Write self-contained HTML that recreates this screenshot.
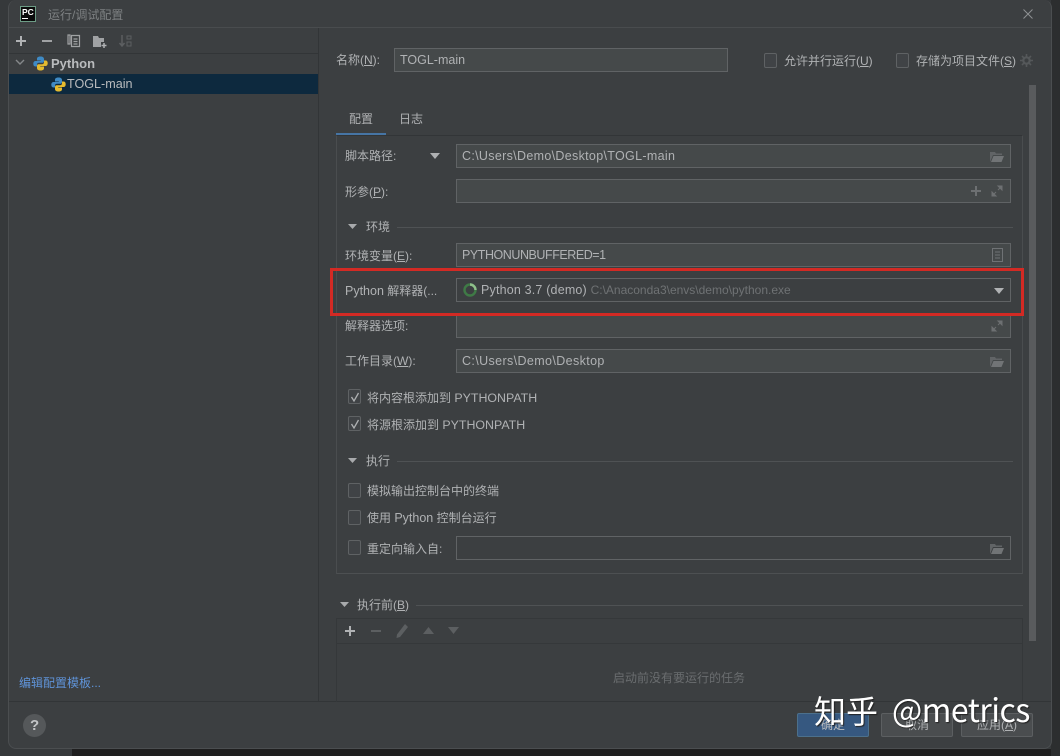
<!DOCTYPE html>
<html><head><meta charset="utf-8">
<style>
*{box-sizing:border-box}
html,body{margin:0;padding:0;width:1060px;height:756px;overflow:hidden;background:#36393b}
body{position:relative;font-family:"Liberation Sans","Noto Sans CJK SC",sans-serif;font-size:12px;color:#b0b2b4;filter:blur(.25px)}
.a{position:absolute}
.t{position:absolute;white-space:nowrap;line-height:16px}
.f{position:absolute;background:#45494a;border:1px solid #606365;height:24px;left:456px;width:555px;color:#b0b2b4;padding-left:5px;line-height:23px;white-space:nowrap;font-size:12.5px}
.cb{position:absolute;width:13px;height:15px;left:348px;border:1px solid #5f6264;background:#404346;border-radius:2px}
.ln{position:absolute;height:1px;background:#4f5254}
.l{font-size:12.4px}
u{text-underline-offset:1px}
svg{position:absolute;overflow:visible}
</style></head><body>
<div class="a" style="left:72px;top:749px;width:988px;height:7px;background:#1f1f1f"></div>
<div class="a" style="left:1051px;top:0;width:9px;height:756px;background:#2c2e2f"></div>
<div class="a" style="left:8px;top:0;width:1044px;height:749px;background:#3c3f41;border-radius:8px;border:1px solid #4b4e50;border-top:0"></div>

<!-- title -->
<div class="ln" style="left:8px;top:27px;width:1043px;background:#494c4e"></div>
<div class="a" style="left:20px;top:6px;width:16px;height:16px;background:#0b0b0b;border:1px solid #6d9c86"></div>
<div class="t" style="left:22px;top:6px;font-size:8.5px;font-weight:bold;color:#fff;line-height:12px">PC</div>
<div class="a" style="left:22px;top:18px;width:6px;height:1px;background:#fff"></div>
<div class="t" style="left:48px;top:7px;color:#7d8082">运行/调试配置</div>
<svg style="left:1023px;top:9px" width="10" height="10"><path d="M0.500 0.500L9.500 9.500M9.500 0.500L0.500 9.500" stroke="#8f9193" stroke-width="1" fill="none"/></svg>

<!-- left toolbar -->
<svg style="left:16px;top:36px" width="10" height="10"><path d="M5 0V10M0 5H10" stroke="#b0b2b4" stroke-width="2"/></svg>
<svg style="left:42px;top:36px" width="10" height="10"><path d="M0 5H10" stroke="#a0a2a4" stroke-width="2"/></svg>
<svg style="left:67px;top:34px" width="13" height="13"><path d="M1 1H3V10H1ZM4.500 1.500H12.500V12.500H4.500ZM6.500 5H10.500M6.500 7.500H10.500M6.500 10H10.500" stroke="#a0a2a4" stroke-width="1.200" fill="none"/></svg>
<svg style="left:93px;top:36px" width="14" height="12"><path d="M0 0H5L6 2H11V6H8V11H0Z" fill="#a0a2a4"/><path d="M11 7V12M8.500 9.500H13.500" stroke="#b0b2b4" stroke-width="1.500"/></svg>
<svg style="left:119px;top:34px" width="14" height="14"><path d="M3 1V12M0.500 9L3 12L5.500 9" stroke="#5c5f61" stroke-width="1.500" fill="none"/><path d="M8 2H12V5H8ZM8 8H12V12H8Z" stroke="#5c5f61" fill="none"/></svg>
<div class="ln" style="left:9px;top:53px;width:310px;background:#323537"></div>
<div class="a" style="left:318px;top:28px;width:1px;height:673px;background:#323537"></div>

<!-- tree -->
<svg style="left:15px;top:59px" width="10" height="7"><path d="M1 1L5 5L9 1" stroke="#85888a" stroke-width="1.400" fill="none"/></svg>
<div class="a" style="left:9px;top:74px;width:309px;height:20px;background:#0d293e"></div>
<svg style="left:33px;top:56px" width="15" height="15" viewBox="0 0 15 15"><path d="M7.500 0.500C4.500 0.500 4 1.700 4 3V4.500H7.800V5H2.500C1 5 0.300 6.300 0.300 7.800C0.300 9.500 1 10.500 2.500 10.500H4V8.500C4 7.300 5 6.800 6 6.800H9.500C10.500 6.800 11 6 11 5V3C11 1.500 9.800 0.500 7.500 0.500Z" fill="#3f8ac4"/><path d="M7.500 14.500C10.500 14.500 11 13.300 11 12V10.500H7.200V10H12.500C14 10 14.700 8.700 14.700 7.200C14.700 5.500 14 4.500 12.500 4.500H11V6.500C11 7.700 10 8.200 9 8.200H5.500C4.500 8.200 4 9 4 10V12C4 13.500 5.200 14.500 7.500 14.500Z" fill="#e4bb2f"/></svg>
<div class="t" style="left:51px;top:56px;font-weight:bold;color:#b9bbbd;font-size:13px">Python</div>
<svg style="left:51px;top:77px" width="15" height="15" viewBox="0 0 15 15"><path d="M7.500 0.500C4.500 0.500 4 1.700 4 3V4.500H7.800V5H2.500C1 5 0.300 6.300 0.300 7.800C0.300 9.500 1 10.500 2.500 10.500H4V8.500C4 7.300 5 6.800 6 6.800H9.500C10.500 6.800 11 6 11 5V3C11 1.500 9.800 0.500 7.500 0.500Z" fill="#3f8ac4"/><path d="M7.500 14.500C10.500 14.500 11 13.300 11 12V10.500H7.200V10H12.500C14 10 14.700 8.700 14.700 7.200C14.700 5.500 14 4.500 12.500 4.500H11V6.500C11 7.700 10 8.200 9 8.200H5.500C4.500 8.200 4 9 4 10V12C4 13.500 5.200 14.500 7.500 14.500Z" fill="#e4bb2f"/></svg>
<div class="t" style="left:67px;top:76px;color:#b9bbbd;font-size:12.6px">TOGL-main</div>

<div class="t" style="left:19px;top:675px;color:#5f93d8">编辑配置模板...</div>

<!-- bottom -->
<div class="ln" style="left:9px;top:701px;width:1042px;background:#323537"></div>
<div class="a" style="left:23px;top:714px;width:23px;height:23px;border-radius:50%;background:#55585a"></div>
<div class="t" style="left:30px;top:718px;font-weight:bold;font-size:15px;color:#c4c6c8">?</div>

<!-- name row -->
<div class="t" style="left:336px;top:52px">名称(<u>N</u>):</div>
<div class="f" style="left:394px;top:48px;width:334px;">TOGL-main</div>
<div class="cb" style="left:764px;top:53px"></div>
<div class="t" style="left:784px;top:53px">允许并行运行(<u>U</u>)</div>
<div class="cb" style="left:896px;top:53px"></div>
<div class="t" style="left:916px;top:53px">存储为项目文件(<u>S</u>)</div>
<svg style="left:1020px;top:54px" width="13" height="13" viewBox="0 0 13 13"><circle cx="6.500" cy="6.500" r="3.200" stroke="#55585a" stroke-width="2.200" fill="none"/><path d="M6.500 0V3M6.500 10V13M0 6.500H3M10 6.500H13M2 2L3.800 3.800M9.200 9.200L11 11M11 2L9.200 3.800M3.800 9.200L2 11" stroke="#55585a" stroke-width="1.600"/></svg>

<!-- scrollbar -->
<div class="a" style="left:1029px;top:85px;width:7px;height:556px;background:#595b5d"></div>

<!-- tabs -->
<div class="t" style="left:349px;top:111px">配置</div>
<div class="t" style="left:399px;top:111px">日志</div>
<div class="a" style="left:336px;top:133px;width:50px;height:3px;background:#4a88c7;opacity:.75"></div>
<div class="a" style="left:336px;top:135px;width:687px;height:439px;border:1px solid #323537;border-left-color:#4a4d4f;border-right-color:#4a4d4f;border-bottom-color:#4d5052"></div>

<!-- form -->
<div class="t" style="left:345px;top:148px">脚本路径:</div>
<svg style="left:430px;top:153px" width="10" height="6"><path d="M0 0H10L5 6Z" fill="#aeb0b2"/></svg>
<div class="f" style="top:144px;letter-spacing:.32px">C:\Users\Demo\Desktop\TOGL-main</div>
<svg style="left:990px;top:151px" width="14" height="11"><path d="M0 1H5L6 2.500H12V4H3L0 11Z" fill="#616466"/><path d="M3.500 5H14L11.500 11H1Z" fill="#717476"/></svg>

<div class="t" style="left:345px;top:184px">形参(<u>P</u>):</div>
<div class="f" style="top:179px"></div>
<svg style="left:971px;top:186px" width="10" height="10"><path d="M5 0V10M0 5H10" stroke="#6d7072" stroke-width="2"/></svg>
<svg style="left:991px;top:185px" width="12" height="12"><path d="M7 1H11V5ZM1 7V11H5ZM9 3L7 5M3 9L5 7" stroke="#6d7072" fill="#6d7072"/></svg>

<svg style="left:348px;top:224px" width="9" height="5"><path d="M0 0H9L4.500 5Z" fill="#a8aaac"/></svg>
<div class="t" style="left:366px;top:219px">环境</div>
<div class="ln" style="left:397px;top:227px;width:616px"></div>

<div class="t" style="left:345px;top:248px">环境变量(<u>E</u>):</div>
<div class="f" style="top:243px;letter-spacing:-.45px">PYTHONUNBUFFERED=1</div>
<svg style="left:992px;top:248px" width="11" height="14"><path d="M0.500 0.500H10.500V13.500H0.500ZM3 4H8M3 7H8M3 10H8" stroke="#6f7275" fill="none"/></svg>

<div class="t" style="left:345px;top:283px"><span class="l" style="font-size:12.5px">Python</span> 解释器(...</div>
<div class="f" style="top:278px;background:#3c3f41;padding-left:24px;letter-spacing:.18px"><span>Python 3.7 (demo)</span> <span style="font-size:12px;color:#6f7274;letter-spacing:0">C:\Anaconda3\envs\demo\python.exe</span></div>
<svg style="left:463px;top:283px" width="15" height="15"><circle cx="7" cy="7" r="5.500" stroke="#3f7a46" stroke-width="2.400" fill="none"/><path d="M7 1.500A5.500 5.500 0 0 1 12.500 7" stroke="#8fc08a" stroke-width="2.400" fill="none"/></svg>
<svg style="left:994px;top:288px" width="10" height="6"><path d="M0 0H10L5 6Z" fill="#b0b2b4"/></svg>

<div class="t" style="left:345px;top:318px">解释器选项:</div>
<div class="f" style="top:314px"></div>
<svg style="left:991px;top:320px" width="12" height="12"><path d="M7 1H11V5ZM1 7V11H5ZM9 3L7 5M3 9L5 7" stroke="#6d7072" fill="#6d7072"/></svg>

<div class="t" style="left:345px;top:353px">工作目录(<u>W</u>):</div>
<div class="f" style="top:349px;letter-spacing:.38px">C:\Users\Demo\Desktop</div>
<svg style="left:990px;top:356px" width="14" height="11"><path d="M0 1H5L6 2.500H12V4H3L0 11Z" fill="#616466"/><path d="M3.500 5H14L11.500 11H1Z" fill="#717476"/></svg>

<div class="cb" style="top:389px"></div>
<svg style="left:350px;top:392px" width="10" height="10"><path d="M1.500 5L4 9L8.500 1" stroke="#aeb0b2" stroke-width="1.300" fill="none"/></svg>
<div class="t" style="left:367px;top:390px">将内容根添加到 <span class="l">PYTHONPATH</span></div>
<div class="cb" style="top:416px"></div>
<svg style="left:350px;top:419px" width="10" height="10"><path d="M1.500 5L4 9L8.500 1" stroke="#aeb0b2" stroke-width="1.300" fill="none"/></svg>
<div class="t" style="left:367px;top:417px">将源根添加到 <span class="l">PYTHONPATH</span></div>

<svg style="left:348px;top:458px" width="9" height="5"><path d="M0 0H9L4.500 5Z" fill="#a8aaac"/></svg>
<div class="t" style="left:366px;top:453px">执行</div>
<div class="ln" style="left:397px;top:461px;width:616px"></div>

<div class="cb" style="top:483px"></div>
<div class="t" style="left:367px;top:483px">模拟输出控制台中的终端</div>
<div class="cb" style="top:510px"></div>
<div class="t" style="left:367px;top:510px">使用 <span style="font-size:12.5px">Python</span> 控制台运行</div>
<div class="cb" style="top:540px"></div>
<div class="t" style="left:367px;top:541px">重定向输入自:</div>
<div class="f" style="top:536px;background:#3c3f41"></div>
<svg style="left:990px;top:543px" width="14" height="11"><path d="M0 1H5L6 2.500H12V4H3L0 11Z" fill="#616466"/><path d="M3.500 5H14L11.500 11H1Z" fill="#717476"/></svg>

<!-- before launch -->
<svg style="left:340px;top:602px" width="9" height="5"><path d="M0 0H9L4.500 5Z" fill="#a8aaac"/></svg>
<div class="t" style="left:357px;top:597px">执行前(<u>B</u>)</div>
<div class="ln" style="left:416px;top:605px;width:607px"></div>
<div class="a" style="left:336px;top:618px;width:687px;height:84px;border:1px solid #35383a;border-bottom:0"></div>
<div class="ln" style="left:337px;top:643px;width:685px;background:#35383a"></div>
<svg style="left:345px;top:626px" width="10" height="10"><path d="M5 0V10M0 5H10" stroke="#b0b2b4" stroke-width="2"/></svg>
<svg style="left:371px;top:626px" width="10" height="10"><path d="M0 5H10" stroke="#5c5f61" stroke-width="2"/></svg>
<svg style="left:396px;top:624px" width="13" height="14"><path d="M9 0L12 3L4 13L0.500 14L1 10.500Z" fill="#5c5f61"/></svg>
<svg style="left:423px;top:627px" width="11" height="7"><path d="M0 7H11L5.500 0Z" fill="#5c5f61"/></svg>
<svg style="left:448px;top:627px" width="11" height="7"><path d="M0 0H11L5.500 7Z" fill="#5c5f61"/></svg>
<div class="t" style="left:613px;top:670px;color:#6a6d6f">启动前没有要运行的任务</div>

<!-- buttons -->
<div class="a" style="left:797px;top:713px;width:72px;height:24px;background:#365880;border:1px solid #4c708c;border-radius:2px;text-align:center;line-height:22px;color:#bbbdbf">确定</div>
<div class="a" style="left:881px;top:713px;width:72px;height:24px;background:#4a4d4f;border:1px solid #5c5f61;border-radius:2px;text-align:center;line-height:22px">取消</div>
<div class="a" style="left:961px;top:713px;width:72px;height:24px;background:#4a4d4f;border:1px solid #5c5f61;border-radius:2px;text-align:center;line-height:22px">应用(<u>A</u>)</div>

<!-- red highlight -->
<div class="a" style="left:330px;top:268px;width:694px;height:48px;border:3px solid #d32a24"></div>

<!-- watermark -->
<div class="t" style="left:814px;top:690px;font-size:32px;line-height:40px;color:#fff;text-shadow:1px 1px 1px #222;font-family:'Noto Sans CJK SC',sans-serif">知乎</div>
<div class="t" style="left:892px;top:689px;font-size:32px;line-height:40px;color:#fff;text-shadow:1px 1px 1px #222;font-family:'Noto Sans CJK SC',sans-serif;letter-spacing:-.5px">@metrics</div>
</body></html>
